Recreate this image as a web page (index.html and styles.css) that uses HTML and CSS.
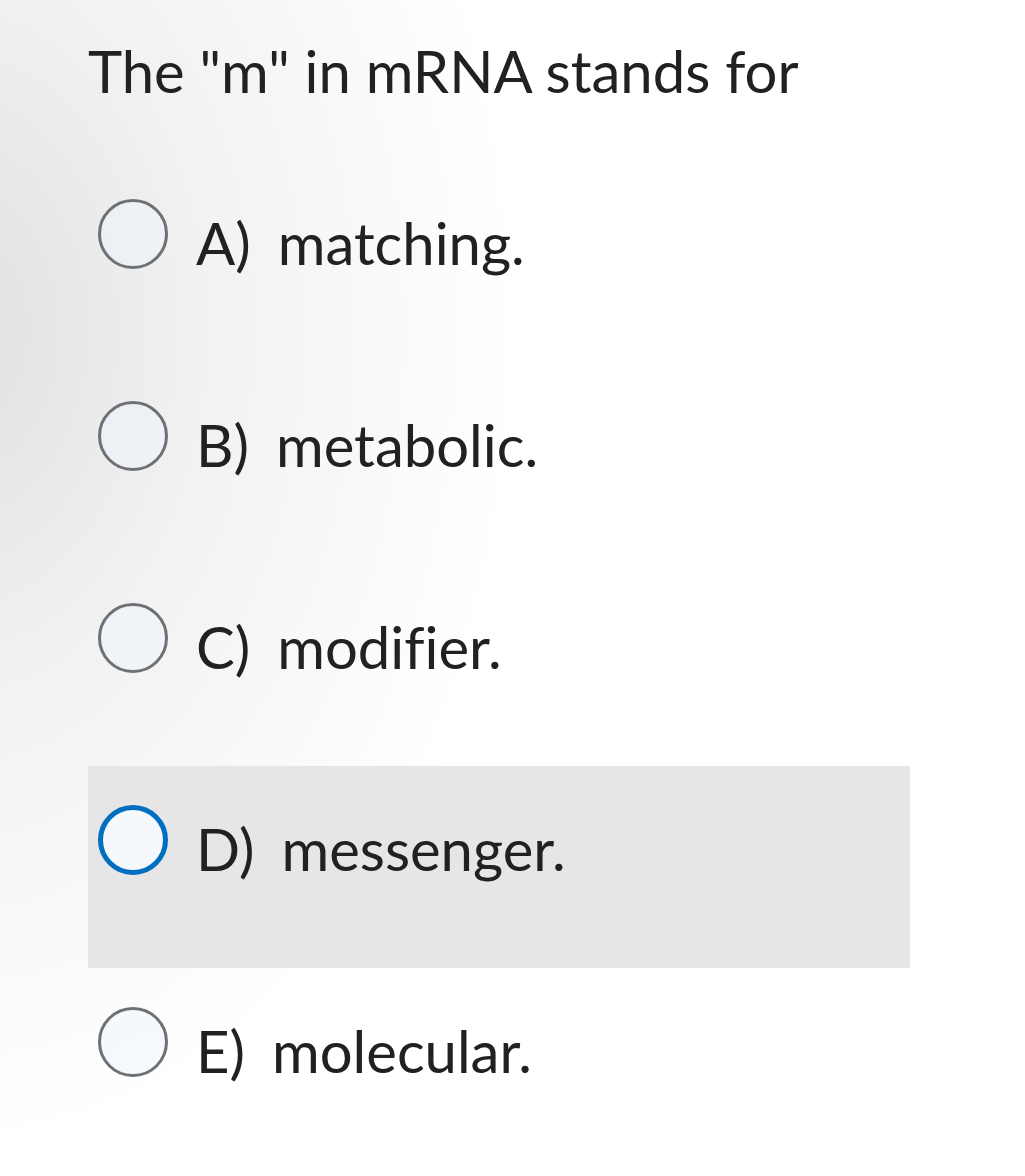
FILE: index.html
```html
<!DOCTYPE html>
<html lang="en">
<head>
<meta charset="utf-8">
<title>Question</title>
<link rel="stylesheet" href="styles.css">
</head>
<body>
<main class="page">
  <h1 class="question">The "m" in mRNA stands for</h1>
  <ul class="options">
    <li class="option"><span class="radio"></span><span class="label"><span class="letter">A)</span>matching.</span></li>
    <li class="option"><span class="radio"></span><span class="label"><span class="letter">B)</span>metabolic.</span></li>
    <li class="option"><span class="radio"></span><span class="label"><span class="letter">C)</span>modifier.</span></li>
    <li class="option option--focus"><span class="radio radio--focus"></span><span class="label"><span class="letter">D)</span>messenger.</span></li>
    <li class="option"><span class="radio"></span><span class="label"><span class="letter">E)</span>molecular.</span></li>
  </ul>
</main>
</body>
</html>
```

FILE: styles.css
```css
html, body {
  margin: 0;
  padding: 0;
}
body {
  width: 1025px;
  min-height: 1176px;
  font-family: Lato, "Noto Sans", sans-serif;
  font-variant-ligatures: none;
  color: #202122;
  background-color: #fff;
  background-image: radial-gradient(ellipse 560px 820px at -40px 330px, #e0e0e0 0%, #f2f2f2 45%, #ffffff 100%);
  background-repeat: no-repeat;
}
.page {
  padding: 36px 0 0 88px;
}
.question {
  margin: 0 0 55px 0;
  font-size: 58px;
  font-weight: 400;
  line-height: 69px;
}
.options {
  list-style: none;
  margin: 0;
  padding: 0;
  width: 822px;
}
.option {
  display: flex;
  align-items: flex-start;
  height: 202px;
  box-sizing: border-box;
  padding: 39px 0 0 10px;
}
.option--focus {
  background: #e6e6e6;
}
.radio {
  flex: none;
  width: 70px;
  height: 70px;
  box-sizing: border-box;
  border-radius: 50%;
  border: 3px solid #6d7174;
  background: rgba(238, 243, 251, 0.5);
}
.radio--focus {
  border: 5px solid #006fbf;
  background: #f5f8fd;
}
.label {
  margin: 9px 0 0 28px;
  font-size: 58px;
  line-height: 69px;
  white-space: nowrap;
}
.letter {
  margin-right: 27px;
}
```
